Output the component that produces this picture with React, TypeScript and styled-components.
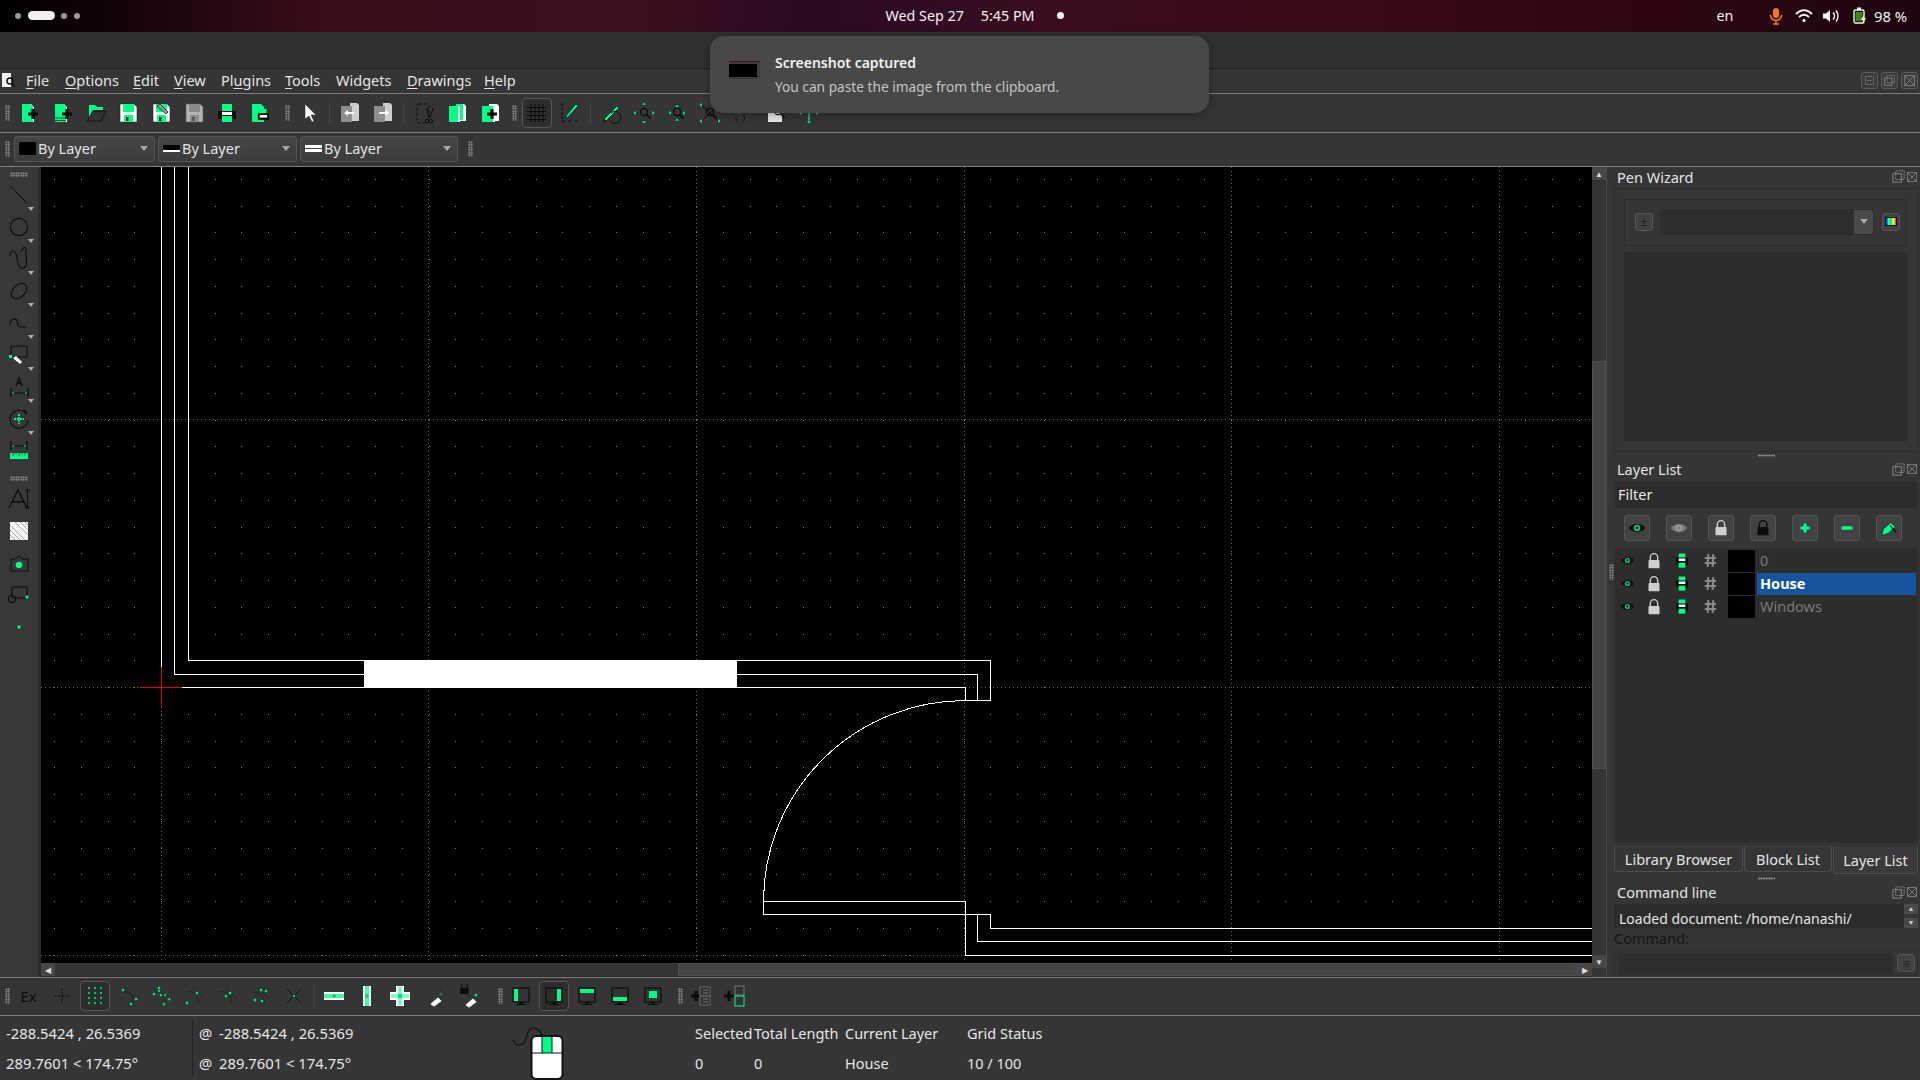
import React from "react";
import styled, { createGlobalStyle } from "styled-components";

const G = "#00ff85";
const K = "#0c0c0c";
const W = "#ffffff";

const GlobalStyle = createGlobalStyle`
  html, body { margin: 0; padding: 0; background: #353535; }
  body { font-family: "Noto Sans", "Open Sans", sans-serif; font-size: 14.5px; color: #e4e4e4; }
  * { box-sizing: border-box; }
`;

const plus = (x: number, y: number, c = K) => (
  <path d={`M${x - 1.6} ${y - 5}h3.2v3.4h3.4v3.2h-3.4v3.4h-3.2v-3.4h-3.4v-3.2h3.4z`} fill={c} />
);
const greenDoc = (
  <>
    <path d="M5 3h8l3 3v15H5z" fill={G} />
    <path d="M13 3h1l3 3v15h-1V6z" fill={W} />
  </>
);
const floppy = (top: string, body: string, line: string) => (
  <>
    <path d="M4 3h14l3 3v15H4z" fill={body} stroke={line} strokeWidth="0.6" />
    <rect x="7" y="3" width="11" height="8" fill={top} />
    <rect x="8" y="14" width="9" height="7" fill={top} />
    <rect x="10" y="16" width="2.5" height="4" fill={line} />
  </>
);
const pen = (
  <>
    <path d="M5 18l2 2 13-13-2-2z" fill={G} stroke={K} strokeWidth="0.7" />
    <path d="M5 18l-1 3 3-1z" fill={K} />
  </>
);
const lens = (cx = 12, cy = 11) => (
  <>
    <circle cx={cx} cy={cy} r="3.6" fill="none" stroke={K} strokeWidth="1.2" />
    <path d={`M${cx + 2.6} ${cy + 2.6}l4 4`} stroke={K} strokeWidth="1.6" />
  </>
);
const tri = (x: number, y: number, d: string) => {
  const p: Record<string, string> = {
    u: `M${x} ${y - 2}l2.4 3h-4.8z`,
    d: `M${x} ${y + 2}l2.4 -3h-4.8z`,
    l: `M${x - 2} ${y}l3 -2.4v4.8z`,
    r: `M${x + 2} ${y}l-3 -2.4v4.8z`,
  };
  return <path d={p[d]} fill={G} stroke={K} strokeWidth="0.4" />;
};
const dot = (x: number, y: number, r = 1.5) => <circle cx={x} cy={y} r={r} fill={G} stroke={K} strokeWidth="0.3" />;
const screen = (fill: React.ReactNode) => (
  <>
    <rect x="4" y="4" width="16" height="14" fill="none" stroke={K} strokeWidth="1.2" />
    <path d="M10 18h4v2h3v1H7v-1h3z" fill={K} />
    {fill}
  </>
);
const lockBody = (c: string) => (
  <>
    <path d="M8 11V8a4 4 0 0 1 8 0v3" fill="none" stroke={c} strokeWidth="1.5" />
    <rect x="6" y="11" width="12" height="9" rx="1" fill={c} />
  </>
);
const eye = (iris: string, lid: string) => (
  <>
    <path d="M3 12c4-6 14-6 18 0-4 6-14 6-18 0z" fill={lid} />
    <circle cx="12" cy="12" r="3.6" fill={iris} />
    <circle cx="12" cy="12" r="1.6" fill={lid} />
  </>
);
const printer = (
  <>
    <rect x="7" y="3" width="10" height="7" fill={G} />
    <rect x="3" y="10" width="18" height="8" rx="1" fill={K} />
    <rect x="7" y="11" width="10" height="3" fill={W} />
    <rect x="7" y="15" width="10" height="6" fill={G} />
  </>
);

const icons: Record<string, React.ReactNode> = {
  new: <>{greenDoc}{plus(16, 13)}</>,
  newTpl: <>{greenDoc}<path d="M5 17h11M5 19.5h11" stroke="#222" strokeWidth="0.8" />{plus(17, 13)}</>,
  open: (
    <>
      <path d="M6 4h6l2 2h6v3H10l-4 9z" fill={G} />
      <path d="M10 10h13l-5 10H4z" fill="#333" stroke={K} strokeWidth="0.8" />
    </>
  ),
  save: floppy(G, W, "#222"),
  saveAs: <>{floppy(G, W, "#222")}<path d="M8 5l9 8 2-2-8-8z" fill="#9a9a9a" stroke={K} strokeWidth="0.7" /></>,
  saveAll: floppy("#8a8a8a", "#b4b4b4", "#555"),
  print: printer,
  preview: (
    <>
      <path d="M4 3h9l3 3v15H4z" fill={G} />
      <g transform="translate(8 6) scale(.62)"><rect x="7" y="3" width="10" height="7" fill={G} /><rect x="3" y="10" width="18" height="11" fill={K} /><rect x="6" y="13" width="12" height="4" fill={W} /></g>
    </>
  ),
  pointer: <path d="M7 3v15l4-3 3 6 2-1-3-6h5z" fill={W} stroke="#222" strokeWidth="0.5" />,
  docPrev: (
    <>
      <path d="M12 2h7l2 2v16h-9z" fill="#cfcfcf" />
      <path d="M3 5h11v16H3z" fill="#8e8e8e" />
      <path d="M6 12l4-3v2h6v2h-6v2z" fill={W} />
    </>
  ),
  docNext: (
    <>
      <path d="M12 2h7l2 2v16h-9z" fill="#cfcfcf" />
      <path d="M3 5h11v16H3z" fill="#8e8e8e" />
      <path d="M18 12l-4-3v2H8v2h6v2z" fill={W} />
    </>
  ),
  cut: (
    <>
      <rect x="5" y="3" width="12" height="19" rx="2" fill="none" stroke={K} strokeWidth="1" strokeDasharray="3 2" />
      <path d="M15 7l2 10M21 7l-3 10" stroke={K} strokeWidth="1" />
      <circle cx="15" cy="20" r="1.7" fill="none" stroke={K} />
      <circle cx="19" cy="20" r="1.7" fill="none" stroke={K} />
    </>
  ),
  copy: (
    <>
      <path d="M11 3h8l2 2v15H11z" fill={W} />
      <path d="M11 3h7v16h-7z" fill={G} />
      <path d="M4 5h10l1 1v15H4z" fill={W} />
      <path d="M4 5h9v16H4z" fill={G} />
    </>
  ),
  paste: (
    <>
      <path d="M11 3h8l2 2v15H11z" fill={W} />
      <path d="M4 5h11v16H4z" fill={G} />
      <path d="M15 5h2v16h-2z" fill={W} />
      {plus(14, 13)}
    </>
  ),
  grid: <path d="M7 3v18M11 3v18M15 3v18M19 3v18M3 6.5h19M3 10.5h19M3 14.5h19M3 18.5h19" stroke={K} strokeWidth="1.1" transform="translate(-1 0)" />,
  draft: (
    <>
      <path d="M4 2v16M4 20h3M10 20h4M17 20h4M4 20v2" stroke={K} strokeWidth="1.1" strokeDasharray="3 1.6" fill="none" />
      <path d="M8 15l1 2 11-12-2-2z" fill={G} stroke={K} strokeWidth="0.6" />
    </>
  ),
  redraw: (
    <>
      {pen}
      <path d="M12 12a6 6 0 1 1-2 5" fill="none" stroke={K} strokeWidth="1" />
    </>
  ),
  zoomIn: <>{lens()}{tri(12, 3, "u")}{tri(12, 21, "d")}{tri(3, 12, "l")}{tri(21, 12, "r")}</>,
  zoomOut: <>{lens()}{tri(12, 5, "d")}{tri(12, 19, "u")}{tri(5, 12, "r")}{tri(19, 12, "l")}</>,
  zoomAuto: (
    <>
      <path d="M4 4l16 16M20 4L4 20" stroke={K} strokeWidth="1" />
      {lens()}
      {tri(3, 4, "l")}{tri(21, 20, "r")}{tri(3, 20, "l")}{tri(21, 4, "r")}
    </>
  ),
  zoomPrev: <path d="M5 17v3M12 14c2 2 2 5 0 7" stroke={K} strokeWidth="1" fill="none" />,
  zoomWin: <><path d="M4 4h14v17H4z" fill="#e8e8e8" />{lens(14, 10)}</>,
  zoomPan: <><path d="M12 6v14" stroke={G} strokeWidth="1.2" />{tri(12, 21, "d")}{tri(4, 12, "l")}{tri(20, 12, "r")}</>,
  // left tool box
  line: <path d="M3 3l17 17" stroke={K} strokeWidth="1" />,
  circle: <circle cx="12" cy="12" r="8.6" fill="none" stroke={K} strokeWidth="1.1" />,
  spline: <path d="M3 9c0-8 6-6 7 2s3 12 7 10 2-6 2-16-4-2-5 0" fill="none" stroke={K} strokeWidth="1.1" />,
  ellipse: <ellipse cx="12" cy="12" rx="9" ry="6" transform="rotate(-45 12 12)" fill="none" stroke={K} strokeWidth="1.1" />,
  polyline: <path d="M3 14c0-6 4-7 7-5 1 1 0 7 3 7h7" fill="none" stroke={K} strokeWidth="1.1" />,
  select: (
    <>
      <rect x="4" y="3" width="16" height="11" rx="1.5" fill="none" stroke={K} strokeWidth="1.1" />
      <rect x="2" y="12" width="3" height="3" fill={G} />
      <path d="M6 15l3-2 6 6-2 2-6-5z" fill={W} />
    </>
  ),
  dimText: (
    <>
      <path d="M4 13v9M21 13v9M5 18h15" stroke={K} strokeWidth="1.2" />
      <path d="M9 11l3-8 3 8M10 8h4" fill="none" stroke={K} strokeWidth="1.3" />
      {dot(6, 18, 1)}{dot(19, 18, 1)}
    </>
  ),
  center: (
    <>
      <path d="M20 8a9 9 0 1 0 1 5M17 3l3 3" fill="none" stroke={K} strokeWidth="1.1" />
      <path d="M12 7v10M7 12h10" stroke={G} strokeWidth="1.8" strokeDasharray="2 1" />
    </>
  ),
  measure: (
    <>
      <path d="M4 2v9M20 2v9M5 7h14" stroke={K} strokeWidth="1.2" />
      {dot(6, 7, 1)}{dot(18, 7, 1)}
      <path d="M3 14h18v6H3z" fill={G} />
      <path d="M6 14v3M9 14v2M12 14v3M15 14v2M18 14v3" stroke="#333" strokeWidth="0.8" />
    </>
  ),
  textTool: (
    <>
      <path d="M2 21L11 3l9 18M5 15h12" fill="none" stroke={K} strokeWidth="1.3" />
      <path d="M18 3h5M20.5 3v18M18 21h5" stroke={K} strokeWidth="1" />
    </>
  ),
  hatch: (
    <>
      <rect x="3" y="3" width="18" height="18" fill="#f4f4f4" />
      <path d="M3 6l15 15M3 11l10 10M3 16l5 5M8 3l13 13M13 3l8 8M18 3l3 3" stroke="#888" strokeWidth="0.7" />
    </>
  ),
  camera: (
    <>
      <path d="M4 8h4l4-3 4 3h5v12H4z" fill="none" stroke={K} strokeWidth="1" />
      <circle cx="12" cy="14" r="3.3" fill={G} />
    </>
  ),
  insert: (
    <>
      <rect x="5" y="4" width="15" height="11" rx="2" fill="none" stroke={K} strokeWidth="1.2" />
      <circle cx="5" cy="16" r="3.6" fill="none" stroke={K} strokeWidth="1.1" />
      {dot(20, 14, 1.8)}
    </>
  ),
  point: dot(12, 12, 1.9),
  // bottom tool bar
  snapFree: <path d="M12 4v16M4 12h16" stroke={K} strokeWidth="1" strokeDasharray="2.4 1.2" />,
  snapGrid: (
    <>
      {[6, 12, 18].map((x) => [4, 9, 14, 19].map((y) => <React.Fragment key={`${x}${y}`}>{dot(x, y, 1.2)}</React.Fragment>))}
    </>
  ),
  snapEnd: <><path d="M5 8c6-2 10 4 12 10M8 4l13 13" stroke="#222" fill="none" />{dot(6, 6)}{dot(14, 20)}{dot(19, 15)}</>,
  snapEnt: <>{dot(4, 10)}{dot(9, 7)}{dot(9, 4)}{dot(11, 11)}{dot(15, 11)}{dot(19, 15)}{dot(14, 20)}<path d="M5 8c6-1 10 4 10 12M9 5l10 10" stroke="#222" fill="none" strokeWidth="0.7" /></>,
  snapCenter: <><path d="M3 8c7-2 12 3 13 11M9 3l12 12" stroke="#222" fill="none" />{dot(14, 9)}{dot(4, 19)}</>,
  snapMid: <><path d="M3 8c7-2 12 3 13 11M9 3l12 12" stroke="#222" fill="none" />{dot(14, 9)}{dot(10, 12)}</>,
  snapDist: <><path d="M3 9c7-2 12 3 13 11M9 4l11 11" stroke="#222" fill="none" />{dot(12, 6)}{dot(17, 7)}{dot(6, 16)}{dot(13, 17)}</>,
  snapInt: <><path d="M5 5l14 14M19 5L5 19" stroke={K} strokeWidth="0.9" />{dot(12, 12, 1.2)}</>,
  restH: (
    <>
      <rect x="2" y="8" width="20" height="8" fill={W} />
      <path d="M2 11h20M2 13h20" stroke={G} strokeWidth="1.5" />
      {dot(12, 12, 1.5)}
    </>
  ),
  restV: (
    <>
      <rect x="8" y="2" width="8" height="20" fill={W} />
      <path d="M11 2v20M13 2v20" stroke={G} strokeWidth="1.5" />
      {dot(12, 12, 1.5)}
    </>
  ),
  restO: (
    <>
      <path d="M8 2h8v6h6v8h-6v6H8v-6H2V8h6z" fill={W} />
      <path d="M11 3v18M13 3v18M3 11h18M3 13h18" stroke={G} strokeWidth="1.1" />
      {dot(12, 12, 1.5)}
    </>
  ),
  relZero: <><path d="M5 20l8-7 4 4-8 6z" fill={W} stroke="#222" strokeWidth="0.6" />{dot(16, 10, 1.6)}<path d="M16 4v12M10 10h12" stroke="#222" strokeWidth="0.6" /></>,
  relLock: (
    <>
      <g transform="translate(-3 -4) scale(.7)">{lockBody(K)}</g>
      <path d="M6 21l8-7 4 4-8 6z" fill={W} stroke="#222" strokeWidth="0.6" />
      {dot(17, 11, 1.6)}
    </>
  ),
  dockL: screen(<rect x="5" y="5" width="4" height="12" fill={G} />),
  dockR: screen(<rect x="15" y="5" width="4" height="12" fill={G} />),
  dockT: screen(<rect x="5" y="5" width="14" height="4" fill={G} />),
  dockB: screen(<rect x="5" y="13" width="14" height="4" fill={G} />),
  dockF: screen(<rect x="8" y="7" width="8" height="7" fill={G} />),
  addLayer: (
    <>
      {plus(7, 12)}
      <rect x="11" y="3" width="10" height="18" fill="#333" stroke="#666" />
      <path d="M11 12h10M14 6h5M14 9h5M14 15h5M14 18h5" stroke="#777" />
    </>
  ),
  addGroup: (
    <>
      {plus(7, 12)}
      <rect x="13" y="2" width="9" height="9" fill="#333" stroke="#777" />
      <rect x="13" y="12" width="9" height="10" fill="#333" stroke={G} />
    </>
  ),
  // layer list
  eyeOn: eye("#00d070", K),
  eyeOff: eye("#9a9a9a", "#7c7c7c"),
  lockOpen: lockBody("#cfcfcf"),
  lockShut: lockBody(K),
  addG: plus(12, 12, G),
  removeG: <rect x="6" y="10" width="12" height="4" rx="1" fill={G} />,
  editG: <><path d="M4 20l2-7 8-7 5 5-8 7z" fill={G} stroke={K} strokeWidth="0.6" /><path d="M13 9l7 8" stroke={K} strokeWidth="1.2" /></>,
  printRow: (
    <>
      <rect x="8" y="3" width="8" height="5" fill={G} />
      <rect x="5" y="8" width="14" height="9" fill={K} />
      <rect x="8" y="9" width="8" height="3" fill={W} />
      <rect x="8" y="14" width="8" height="6" fill={G} />
    </>
  ),
  hash: <path d="M9 3L8 21M16 3l-1 18M4 8.5h16M4 15.5h16" stroke="#8a8a8a" strokeWidth="3" />,
  // window controls
  winMin: <path d="M3 3h10v10H3zM5 8h6" fill="none" stroke="#8e8e8e" strokeDasharray="2 1" />,
  winFloat: <><path d="M2 5h9v9H2z" fill="none" stroke="#8e8e8e" /><path d="M5 2h9v9H5z" fill="none" stroke="#8e8e8e" strokeDasharray="2 1" /></>,
  winClose: <><path d="M2 2h12v12H2z" fill="none" stroke="#8e8e8e" /><path d="M2 2l12 12M14 2L2 14" stroke="#8e8e8e" /></>,
};

const Ico = ({ n, s = 24 }: { n: string; s?: number }) => (
  <svg viewBox="0 0 24 24" width={s} height={s}>{icons[n]}</svg>
);
const SmallIco = ({ n, s = 16 }: { n: string; s?: number }) => (
  <svg viewBox="0 0 16 16" width={s} height={s}>{icons[n]}</svg>
);

const Page = styled.div`
  width: 1920px;
  height: 1080px;
  display: flex;
  flex-direction: column;
  overflow: hidden;
  position: relative;
  background: #353535;
`;

const TopBar = styled.div`
  height: 32px;
  flex: none;
  display: grid;
  grid-template-columns: 1fr auto 1fr;
  align-items: center;
  padding-bottom: 1px;
  color: #f2f2f2;
  font-size: 14.3px;
  background: linear-gradient(90deg, #000 0%, #120308 6%, #3a0d19 17%, #3d0e1d 33%, #2a0a22 42%, #3a0c20 55%, #3c0a16 68%, #30060f 84%, #1c0410 100%);
`;
const Workspaces = styled.div`
  display: flex;
  align-items: center;
  gap: 6.5px;
  padding-left: 15px;
`;
const WsDot = styled.span<{ $active?: boolean }>`
  width: ${(p) => (p.$active ? 27 : 6)}px;
  height: ${(p) => (p.$active ? 9 : 6)}px;
  border-radius: 5px;
  background: ${(p) => (p.$active ? "#f0f0f0" : "#9c9c9c")};
`;
const Clock = styled.div`
  display: flex;
  gap: 17px;
`;
const Tray = styled.div`
  display: flex;
  align-items: center;
  padding-right: 13px;
`;
const RecDot = styled.span`
  width: 7px;
  height: 7px;
  border-radius: 50%;
  background: #f4f4f4;
  margin-left: 22px;
  margin-right: auto;
`;
const TraySlot = styled.span<{ $w: number }>`
  width: ${(p) => p.$w}px;
  display: flex;
  justify-content: center;
  align-items: center;
`;
const BatteryText = styled.span`
  margin-left: 2px;
  font-size: 14.8px;
`;

const TitleGap = styled.div`
  height: 37px;
  flex: none;
  background: #303030;
  border-bottom: 1px solid #1f1f1f;
`;

const MenuBar = styled.div`
  height: 25px;
  flex: none;
  display: flex;
  align-items: center;
  padding-bottom: 2px;
  background: #353535;
  border-bottom: 1px solid #7c7c7c;
  position: relative;
`;
const AppMark = styled.svg`
  width: 14px;
  height: 16px;
  margin: 0 10px 0 2px;
  flex: none;
`;
const MenuItem = styled.span<{ $w: number }>`
  width: ${(p) => p.$w}px;
  color: #e4e4e4;
  white-space: nowrap;
  u { text-underline-offset: 2px; }
`;
const WinButtons = styled.div`
  margin-left: auto;
  display: flex;
  gap: 2px;
  padding-right: 2px;
`;
const WinButton = styled.span`
  width: 17px;
  height: 17px;
  border: 1px solid #5a5a5a;
  border-radius: 3px;
  background: #3c3c3c;
  display: flex;
  align-items: center;
  justify-content: center;
  margin-left: 1px;
`;

const Toolbar = styled.div<{ $h: number; $top?: boolean }>`
  height: ${(p) => p.$h}px;
  flex: none;
  display: flex;
  align-items: center;
  padding-bottom: 1px;
  background: #353535;
  border-bottom: 1px solid #7c7c7c;
  border-top: ${(p) => (p.$top ? "1px solid #7c7c7c" : "none")};
`;
const Grip = styled.span<{ $ml?: number; $mr?: number }>`
  width: 5px;
  height: 16px;
  flex: none;
  margin-left: ${(p) => p.$ml ?? 0}px;
  margin-right: ${(p) => p.$mr ?? 0}px;
  background: radial-gradient(#808080 50%, transparent 55%) 0 0 / 2.5px 2.5px;
`;
const Sep = styled.span<{ $ml?: number; $mr?: number }>`
  width: 1px;
  height: 22px;
  flex: none;
  margin-left: ${(p) => p.$ml ?? 0}px;
  margin-right: ${(p) => p.$mr ?? 0}px;
  background: #444;
`;
const Tool = styled.span<{ $w?: number; $ml?: number; $on?: boolean }>`
  width: ${(p) => p.$w ?? 33}px;
  height: 30px;
  flex: none;
  margin-left: ${(p) => p.$ml ?? 0}px;
  display: flex;
  align-items: center;
  justify-content: center;
  border: 1px solid ${(p) => (p.$on ? "#565656" : "transparent")};
  border-radius: 4px;
  background: ${(p) => (p.$on ? "#2d2d2d" : "transparent")};
  color: #0c0c0c;
  font-size: 15px;
`;

const Combo = styled.div<{ $w: number }>`
  width: ${(p) => p.$w}px;
  height: 26px;
  flex: none;
  margin-right: 3px;
  display: flex;
  align-items: center;
  padding: 0 6px 2px 4px;
  gap: 2px;
  border: 1px solid #555;
  border-radius: 3px;
  background: linear-gradient(#454545, #3c3c3c);
  color: #e4e4e4;
`;
const Swatch = styled.span<{ $kind: "color" | "width" | "style" }>`
  width: 17px;
  height: ${(p) => (p.$kind === "color" ? 13 : 7)}px;
  flex: none;
  background: ${(p) =>
    p.$kind === "color" ? "#000" : p.$kind === "width" ? "linear-gradient(#000 0 70%, #fff 70%)" : "linear-gradient(#fff 0 38%, #444 38% 62%, #fff 62%)"};
`;
const ComboArrow = styled.span<{ $plain?: boolean }>`
  margin-left: ${(p) => (p.$plain ? "0" : "auto")};
  width: 0;
  height: 0;
  border-left: 4px solid transparent;
  border-right: 4px solid transparent;
  border-top: 5px solid #aaa;
`;

const Main = styled.div`
  height: 810px;
  flex: none;
  display: flex;
`;

const ToolBox = styled.div`
  width: 41px;
  flex: none;
  display: flex;
  flex-direction: column;
  align-items: center;
  border-right: 3px solid #2c2c2c;
  background: #383838;
`;
const HGrip = styled.span<{ $mt: number; $mb: number }>`
  width: 18px;
  height: 5px;
  flex: none;
  margin-top: ${(p) => p.$mt}px;
  margin-bottom: ${(p) => p.$mb}px;
  background: radial-gradient(#808080 50%, transparent 55%) 0 0 / 2.5px 2.5px;
`;
const BoxItem = styled.span`
  position: relative;
  width: 38px;
  height: 32px;
  flex: none;
  display: flex;
  align-items: center;
  justify-content: center;
`;
const MoreMark = styled.i`
  position: absolute;
  left: 28px;
  bottom: 0;
  width: 0;
  height: 0;
  border-left: 3px solid transparent;
  border-right: 3px solid transparent;
  border-top: 4px solid #b0b0b0;
`;

const CanvasArea = styled.div`
  width: 1566px;
  flex: none;
  display: grid;
  grid-template-columns: 1551px 15px;
  grid-template-rows: 796px 14px;
`;
const Canvas = styled.svg`
  display: block;
  grid-column: 1;
  grid-row: 1;
  background: #000;
`;
const VScroll = styled.div`
  display: flex;
  flex-direction: column;
  background: #343434;
  grid-column: 2;
  grid-row: 1 / 3;
  border-right: 1px solid #4a4a4a;
`;
const HScroll = styled.div`
  display: flex;
  grid-column: 1;
  grid-row: 2;
  background: #343434;
  border-bottom: 1px solid #2c2c2c;
`;
const ScrollBtn = styled.span`
  width: 14px;
  height: 13px;
  flex: none;
  display: flex;
  align-items: center;
  justify-content: center;
  background: #474747;
  color: #ddd;
  font-size: 8px;
  line-height: 1;
`;
const ScrollGap = styled.span<{ $size?: number }>`
  flex: ${(p) => (p.$size ? `0 0 ${p.$size}px` : "1")};
`;
const ScrollThumb = styled.span<{ $size?: number }>`
  flex: ${(p) => (p.$size ? `0 0 ${p.$size}px` : "1")};
  background: #444;
  border: 1px solid #505050;
`;

const RightDock = styled.div`
  flex: 1;
  min-width: 0;
  display: flex;
  align-items: stretch;
`;
const VGrip = styled.span`
  width: 5px;
  height: 16px;
  flex: none;
  align-self: center;
  margin-left: 2px;
  background: radial-gradient(#808080 50%, transparent 55%) 0 0 / 2.5px 2.5px;
`;
const DockColumn = styled.div`
  flex: 1;
  min-width: 0;
  display: flex;
  flex-direction: column;
  padding-right: 2px;
`;
const DockTitle = styled.div<{ $h: number }>`
  height: ${(p) => p.$h}px;
  flex: none;
  display: flex;
  align-items: center;
  padding: 0 0 2px 3px;
  color: #e4e4e4;
`;
const DockActions = styled.span`
  margin-left: auto;
  display: flex;
  align-items: center;
`;
const PenFrame = styled.div`
  height: 264px;
  flex: none;
  margin-left: -1px;
  padding: 10px;
  border: 1px solid #2c2c2c;
  display: flex;
  flex-direction: column;
  gap: 6px;
`;
const PenRow = styled.div`
  height: 47px;
  flex: none;
  display: flex;
  align-items: center;
  padding: 0 0 2px 10px;
  border: 1px solid #2c2c2c;
`;
const SquareButton = styled.span<{ $size: number; $ml?: number }>`
  width: ${(p) => p.$size}px;
  height: ${(p) => p.$size}px;
  flex: none;
  margin-left: ${(p) => p.$ml ?? 0}px;
  display: flex;
  align-items: center;
  justify-content: center;
  border: 1px solid #555;
  border-radius: 3px;
  background: #424242;
  color: #222;
  font-size: 12px;
`;
const PenCombo = styled.div`
  width: 214px;
  height: 26px;
  flex: none;
  margin-left: 7px;
  display: flex;
  justify-content: flex-end;
  border: 1px solid #2c2c2c;
  border-radius: 3px;
  background: #2e2e2e;
`;
const PenComboDrop = styled.span`
  width: 19px;
  display: flex;
  align-items: center;
  justify-content: center;
  background: #4a4a4a;
  border-radius: 0 3px 3px 0;
`;
const HueBox = styled.span`
  width: 12px;
  height: 9px;
  background: linear-gradient(90deg, #00f 0%, #0ff 25%, #0f0 50%, #ff0 75%, #f0f 100%);
  border: 1px solid #111;
`;
const PenList = styled.div`
  flex: 1;
  background: #2d2d2d;
  border: 1px solid #2a2a2a;
`;
const Splitter = styled.span<{ $h: number }>`
  height: ${(p) => p.$h}px;
  flex: none;
  display: flex;
  justify-content: center;
  align-items: center;
  &::after {
    content: "";
    width: 17px;
    height: 3px;
    background: radial-gradient(#808080 50%, transparent 55%) 0 0 / 2.5px 2.5px;
  }
`;
const Filter = styled.div`
  height: 27px;
  flex: none;
  display: flex;
  align-items: center;
  padding: 0 0 2px 3px;
  border-radius: 3px;
  border: 1px solid #303030;
  background: #2c2c2c;
  color: #e8e8e8;
`;
const LayerTools = styled.div`
  height: 26px;
  flex: none;
  display: flex;
  gap: 16px;
  margin: 7px 0 7px 10px;
`;
const LayerTool = styled.span`
  width: 26px;
  height: 26px;
  display: flex;
  align-items: center;
  justify-content: center;
  border: 1px solid #555;
  border-radius: 3px;
  background: #424242;
`;
const LayerTable = styled.div`
  height: 295px;
  flex: none;
  background: #2d2d2d;
  border: 1px solid #303030;
  border-right: none;
`;
const LayerRow = styled.div`
  height: 23px;
  display: grid;
  grid-template-columns: 25px 28px 28px 28px 32px 1fr;
  align-items: center;
  justify-items: center;
`;
const LayerSwatch = styled.span`
  width: 27px;
  height: 22px;
  margin-left: 3px;
  background: #000;
`;
const LayerName = styled.span<{ $active?: boolean }>`
  justify-self: stretch;
  height: 22px;
  margin: 0 2px 0 1px;
  padding-left: 3px;
  line-height: 20px;
  color: ${(p) => (p.$active ? "#fff" : "#7a7a7a")};
  font-weight: ${(p) => (p.$active ? 700 : 400)};
  background: ${(p) => (p.$active ? "#17549e" : "transparent")};
`;
const Tabs = styled.div`
  height: 28px;
  flex: none;
  display: flex;
  margin-top: 3px;
  gap: 1px;
`;
const Tab = styled.span<{ $w: number; $active?: boolean }>`
  width: ${(p) => p.$w}px;
  height: ${(p) => (p.$active ? 28 : 26)}px;
  display: flex;
  align-items: center;
  justify-content: center;
  border: 1px solid #4c4c4c;
  border-top-color: ${(p) => (p.$active ? "#353535" : "#3f3f3f")};
  border-radius: 0 0 4px 4px;
  color: #e4e4e4;
  background: ${(p) => (p.$active ? "#3a3a3a" : "#353535")};
`;
const LogBox = styled.div`
  height: 24px;
  flex: none;
  display: flex;
  align-items: center;
  background: #2c2c2c;
  padding: 5px 0 0 5px;
  font-size: 14px;
  position: relative;
  margin-top: 1px;
`;
const LogArrows = styled.span`
  position: absolute;
  right: 0;
  top: 0;
  bottom: 0;
  width: 14px;
  display: flex;
  flex-direction: column;
  justify-content: space-between;
  background: #353535;
`;
const LogArrow = styled.span`
  height: 10px;
  background: #4a4a4a;
  color: #ccc;
  font-size: 7px;
  line-height: 10px;
  text-align: center;
`;
const CommandLabel = styled.div`
  height: 22px;
  flex: none;
  display: flex;
  align-items: center;
  padding-bottom: 2px;
  color: #141414;
`;
const CommandFrame = styled.div`
  height: 26px;
  flex: none;
  display: flex;
  align-items: center;
  padding: 0 2px 0 3px;
  border: 1px solid #2e2e2e;
`;
const CommandInput = styled.span`
  width: 276px;
  height: 21px;
  background: #2e2e2e;
`;

const StatusBar = styled.div`
  height: 64px;
  flex: none;
  display: flex;
  font-size: 14.5px;
  color: #e6e6e6;
`;
const CoordBlock = styled.div<{ $w: number; $pl: number }>`
  width: ${(p) => p.$w}px;
  flex: none;
  padding-left: ${(p) => p.$pl}px;
  display: grid;
  grid-auto-rows: 30px;
  align-content: center;
  align-items: center;
  font-size: 14.8px;
`;
const CoordRow = styled.div`
  display: flex;
  white-space: nowrap;
`;
const AtSign = styled.span`
  width: 20px;
`;
const StatusDivider = styled.span`
  width: 1px;
  flex: none;
  margin: 3px 0;
  background: #222;
`;
const MouseIcon = styled.svg`
  width: 51px;
  height: 54px;
  flex: none;
  align-self: flex-end;
  margin-right: 131px;
`;
const InfoCol = styled.div<{ $w: number }>`
  width: ${(p) => p.$w}px;
  flex: none;
  display: grid;
  grid-auto-rows: 30px;
  align-content: center;
  align-items: center;
  white-space: nowrap;
`;

const Notification = styled.div`
  position: absolute;
  left: 710px;
  top: 36px;
  width: 499px;
  height: 77px;
  border-radius: 14px;
  background: #484848;
  box-shadow: 0 2px 8px rgba(0, 0, 0, 0.35);
  display: flex;
  padding: 25px 0 0 19px;
`;
const Thumb = styled.span`
  width: 31px;
  height: 18px;
  flex: none;
  background: #3d3d3d;
  border-top: 1px solid #4a1020;
  padding: 2px 3px 2px 0;
  display: flex;
`;
const ThumbInner = styled.span`
  flex: 1;
  background: #000;
`;
const NoteText = styled.div`
  margin: -8px 0 0 15px;
  display: flex;
  flex-direction: column;
  gap: 5px;
`;
const NoteTitle = styled.div`
  font-weight: 600;
  font-size: 14px;
  color: #f0f0f0;
`;
const NoteBody = styled.div`
  font-size: 13.7px;
  color: #c4c4c4;
`;

const majorX = [161, 428, 696, 964, 1231, 1499];
const majorY = [419, 687, 955];

const gridDots = () => {
  let d = "";
  for (let i = -4; i < 54; i++) {
    for (let j = -19; j < 11; j++) {
      d += `M${Math.round(161 + i * 26.75)} ${Math.round(687 + j * 26.75)}h1v1h-1z`;
    }
  }
  return d;
};

const wallPaths = [
  "M161.5 167V667",
  "M174.5 167V674.5H364",
  "M188.5 167V660.5H364",
  "M182 687.5H364",
  "M737 660.5H990.5V700.5H957",
  "M737 674.5H977.5V700.5",
  "M737 687.5H965.5V700.5",
  "M763.5 901.5H965.5V955.5H1592",
  "M763.5 901.5V914.5H990.5V928.5H1592",
  "M977.5 914.5V941.5H1592",
];

const Drawing = () => (
  <Canvas viewBox="41 167 1551 796" width={1551} height={796} shapeRendering="crispEdges">
    <path d={gridDots()} fill="#808080" />
    {majorX.map((x) => (
      <line key={x} x1={x + 0.5} x2={x + 0.5} y1={167} y2={963} stroke="#666" strokeDasharray="1 3" />
    ))}
    {majorY.map((y) => (
      <line key={y} x1={41} x2={1592} y1={y + 0.5} y2={y + 0.5} stroke="#666" strokeDasharray="1 3" />
    ))}
    {wallPaths.map((d) => (
      <path key={d} d={d} fill="none" stroke="#fff" />
    ))}
    <path d="M763.5 901.5A202 201 0 0 1 965.5 700.5" fill="none" stroke="#fff" />
    <rect x={364} y={660} width={373} height={28} fill="#fff" />
    <path d="M140 687.5H182M161.5 667V708" fill="none" stroke="#e00000" />
  </Canvas>
);

const mainTools = ["new", "newTpl", "open", "save", "saveAs", "saveAll", "print", "preview"];
const zoomTools = ["zoomAuto", "zoomPrev", "zoomWin", "zoomPan"];
const boxTop = ["line", "circle", "spline", "ellipse", "polyline", "select", "dimText", "center", "measure"];
const boxBottom = ["textTool", "hatch", "camera", "insert", "point"];

const layers = [
  { name: "0" },
  { name: "House", active: true },
  { name: "Windows" },
];

const menus: [React.ReactNode, number][] = [
  [<><u>F</u>ile</>, 39],
  [<><u>O</u>ptions</>, 68],
  [<><u>E</u>dit</>, 41],
  [<><u>V</u>iew</>, 47],
  [<>Pl<u>u</u>gins</>, 64],
  [<><u>T</u>ools</>, 51],
  [<>Widgets</>, 71],
  [<><u>D</u>rawings</>, 77],
  [<><u>H</u>elp</>, 40],
];

const DockButtons = () => (
  <DockActions>
    <SmallIco n="winFloat" s={15} />
    <SmallIco n="winClose" s={12} />
  </DockActions>
);

export default function App() {
  return (
    <Page>
      <GlobalStyle />
      <TopBar>
        <Workspaces>
          <WsDot />
          <WsDot $active />
          <WsDot />
          <WsDot />
        </Workspaces>
        <Clock>
          <span>Wed Sep 27</span>
          <span>5:45 PM</span>
        </Clock>
        <Tray>
          <RecDot />
          <TraySlot $w={70}>en</TraySlot>
          <TraySlot $w={32}>
            <svg width="16" height="18" viewBox="0 0 16 18">
              <rect x="5" y="1" width="6" height="10" rx="3" fill="#f07818" />
              <path d="M2.5 8a5.5 5.5 0 0 0 11 0M8 14v3M5 17h6" stroke="#f07818" strokeWidth="1.6" fill="none" />
            </svg>
          </TraySlot>
          <TraySlot $w={24}>
            <svg width="18" height="14" viewBox="0 0 18 14" fill="none" stroke="#f4f4f4" strokeWidth="1.8">
              <path d="M1 5c5-5 11-5 16 0M4 8c3-3 7-3 10 0" />
              <circle cx="9" cy="11.5" r="1.6" fill="#f4f4f4" stroke="none" />
            </svg>
          </TraySlot>
          <TraySlot $w={32}>
            <svg width="17" height="14" viewBox="0 0 17 14">
              <path d="M0 4.500h3L7 1v12L3 9.500H0z" fill="#f4f4f4" />
              <path d="M10 3.500a5 5 0 0 1 0 7M13 1.500a9 9 0 0 1 0 11" fill="none" stroke="#f4f4f4" strokeWidth="1.6" />
            </svg>
          </TraySlot>
          <TraySlot $w={24}>
            <svg width="14" height="17" viewBox="0 0 14 17">
              <rect x="1" y="3" width="10" height="13" rx="1.500" fill="none" stroke="#f4f4f4" strokeWidth="1.400" />
              <rect x="4" y="0.500" width="4" height="2.500" fill="#f4f4f4" />
              <rect x="2.500" y="5" width="7" height="9" fill="#3d8a10" />
              <path d="M11 8l-3 5h2l-1 4 4-6h-2z" fill="#f4f4f4" />
            </svg>
          </TraySlot>
          <BatteryText>98 %</BatteryText>
        </Tray>
      </TopBar>
      <TitleGap />
      <MenuBar>
        <AppMark viewBox="0 0 14 16">
          <path d="M0 1h9v14H0z" fill="#f2f2f2" />
          <circle cx="8" cy="9" r="3" fill="none" stroke="#111" strokeWidth="1.500" />
          <path d="M10 11l3 4" stroke="#111" strokeWidth="1.500" />
        </AppMark>
        {menus.map(([label, w], i) => (
          <MenuItem key={i} $w={w}>{label}</MenuItem>
        ))}
        <WinButtons>
          <WinButton><SmallIco n="winMin" s={13} /></WinButton>
          <WinButton><SmallIco n="winFloat" s={13} /></WinButton>
          <WinButton><SmallIco n="winClose" s={13} /></WinButton>
        </WinButtons>
      </MenuBar>
      <Toolbar $h={39}>
        <Grip $ml={5} $mr={2} />
        {mainTools.map((n) => (
          <Tool key={n}><Ico n={n} /></Tool>
        ))}
        <Grip $ml={9} $mr={3} />
        <Tool><Ico n="pointer" /></Tool>
        <Sep $ml={3} $mr={3} />
        <Tool><Ico n="docPrev" /></Tool>
        <Tool><Ico n="docNext" /></Tool>
        <Sep $ml={4} $mr={3} />
        <Tool><Ico n="cut" /></Tool>
        <Tool><Ico n="copy" /></Tool>
        <Tool><Ico n="paste" /></Tool>
        <Grip $ml={6} $mr={5} />
        <Tool $w={30} $on><Ico n="grid" /></Tool>
        <Tool $ml={1}><Ico n="draft" /></Tool>
        <Sep $ml={4} $mr={3} />
        <Tool><Ico n="redraw" /></Tool>
        <Tool><Ico n="zoomIn" /></Tool>
        <Tool><Ico n="zoomOut" /></Tool>
        {zoomTools.map((n) => (
          <Tool key={n}><Ico n={n} /></Tool>
        ))}
      </Toolbar>
      <Toolbar $h={34}>
        <Grip $ml={5} $mr={4} />
        <Combo $w={141}>
          <Swatch $kind="color" />By Layer<ComboArrow />
        </Combo>
        <Combo $w={139}>
          <Swatch $kind="width" />By Layer<ComboArrow />
        </Combo>
        <Combo $w={158}>
          <Swatch $kind="style" />By Layer<ComboArrow />
        </Combo>
        <Grip $ml={7} />
      </Toolbar>
      <Main>
        <ToolBox>
          <HGrip $mt={5} $mb={2} />
          {boxTop.map((n, i) => (
            <BoxItem key={n}>
              <Ico n={n} />
              {i < 8 && <MoreMark />}
            </BoxItem>
          ))}
          <HGrip $mt={9} $mb={2} />
          {boxBottom.map((n) => (
            <BoxItem key={n}><Ico n={n} /></BoxItem>
          ))}
        </ToolBox>
        <CanvasArea>
          <Drawing />
          <VScroll>
            <ScrollBtn>▲</ScrollBtn>
            <ScrollGap $size={181} />
            <ScrollThumb $size={408} />
            <ScrollGap />
            <ScrollBtn>▼</ScrollBtn>
            <ScrollGap $size={9} />
          </VScroll>
          <HScroll>
            <ScrollBtn>◀</ScrollBtn>
            <ScrollGap $size={623} />
            <ScrollThumb />
            <ScrollBtn>▶</ScrollBtn>
          </HScroll>
        </CanvasArea>
        <RightDock>
          <VGrip />
          <DockColumn>
            <DockTitle $h={21}>Pen Wizard<DockButtons /></DockTitle>
            <PenFrame>
              <PenRow>
                <SquareButton $size={18}>±</SquareButton>
                <PenCombo>
                  <PenComboDrop><ComboArrow $plain /></PenComboDrop>
                </PenCombo>
                <SquareButton $size={18} $ml={8}><HueBox /></SquareButton>
              </PenRow>
              <PenList />
            </PenFrame>
            <Splitter $h={7} />
            <DockTitle $h={22}>Layer List<DockButtons /></DockTitle>
            <Filter>Filter</Filter>
            <LayerTools>
              {["eyeOn", "eyeOff", "lockOpen", "lockShut", "addG", "removeG", "editG"].map((n) => (
                <LayerTool key={n}><Ico n={n} s={22} /></LayerTool>
              ))}
            </LayerTools>
            <LayerTable>
              {layers.map((l) => (
                <LayerRow key={l.name}>
                  <Ico n="eyeOn" s={17} />
                  <Ico n="lockOpen" s={22} />
                  <Ico n="printRow" s={20} />
                  <Ico n="hash" s={17} />
                  <LayerSwatch />
                  <LayerName $active={l.active}>{l.name}</LayerName>
                </LayerRow>
              ))}
            </LayerTable>
            <Tabs>
              <Tab $w={129}>Library Browser</Tab>
              <Tab $w={88}>Block List</Tab>
              <Tab $w={85} $active>Layer List</Tab>
            </Tabs>
            <Splitter $h={9} />
            <DockTitle $h={20}>Command line<DockButtons /></DockTitle>
            <LogBox>
              Loaded document: /home/nanashi/
              <LogArrows>
                <LogArrow>▲</LogArrow>
                <LogArrow>▼</LogArrow>
              </LogArrows>
            </LogBox>
            <CommandLabel>Command:</CommandLabel>
            <CommandFrame>
              <CommandInput />
              <SquareButton $size={18} $ml={4}>≡</SquareButton>
            </CommandFrame>
          </DockColumn>
        </RightDock>
      </Main>
      <Toolbar $h={39} $top>
        <Grip $ml={5} $mr={2} />
        <Tool>Ex</Tool>
        <Tool><Ico n="snapFree" /></Tool>
        <Tool $w={30} $ml={2} $on><Ico n="snapGrid" /></Tool>
        <Tool $ml={2}><Ico n="snapEnd" /></Tool>
        <Tool><Ico n="snapEnt" /></Tool>
        <Tool><Ico n="snapCenter" /></Tool>
        <Tool><Ico n="snapMid" /></Tool>
        <Tool><Ico n="snapDist" /></Tool>
        <Tool><Ico n="snapInt" /></Tool>
        <Sep $ml={4} $mr={2} />
        <Tool><Ico n="restH" /></Tool>
        <Tool><Ico n="restV" /></Tool>
        <Tool><Ico n="restO" /></Tool>
        <Tool $ml={4}><Ico n="relZero" /></Tool>
        <Tool $ml={1}><Ico n="relLock" /></Tool>
        <Grip $ml={11} $mr={1} />
        <Tool><Ico n="dockL" /></Tool>
        <Tool $w={30} $ml={2} $on><Ico n="dockR" /></Tool>
        <Tool $ml={1}><Ico n="dockT" /></Tool>
        <Tool><Ico n="dockB" /></Tool>
        <Tool><Ico n="dockF" /></Tool>
        <Grip $ml={9} $mr={1} />
        <Tool><Ico n="addLayer" /></Tool>
        <Tool><Ico n="addGroup" /></Tool>
      </Toolbar>
      <StatusBar>
        <CoordBlock $w={192} $pl={6}>
          <CoordRow>-288.5424 , 26.5369</CoordRow>
          <CoordRow>289.7601 &lt; 174.75°</CoordRow>
        </CoordBlock>
        <StatusDivider />
        <CoordBlock $w={320} $pl={6}>
          <CoordRow><AtSign>@</AtSign>-288.5424 , 26.5369</CoordRow>
          <CoordRow><AtSign>@</AtSign>289.7601 &lt; 174.75°</CoordRow>
        </CoordBlock>
        <MouseIcon viewBox="0 0 51 54">
          <path d="M30 11C27 3 20 0 17 3c-5 5-2 16-11 16-3 0-5-2-6-5" fill="none" stroke="#111" strokeWidth="1.200" />
          <rect x="18.500" y="10" width="31" height="43" rx="5" fill="#fff" stroke="#111" strokeWidth="2" />
          <rect x="29" y="11" width="10" height="16" fill={G} />
          <path d="M19 27h30M29 11v16M39 11v16" stroke="#111" strokeWidth="1" />
        </MouseIcon>
        <InfoCol $w={59}><span>Selected</span><span>0</span></InfoCol>
        <InfoCol $w={91}><span>Total Length</span><span>0</span></InfoCol>
        <InfoCol $w={122}><span>Current Layer</span><span>House</span></InfoCol>
        <InfoCol $w={100}><span>Grid Status</span><span>10 / 100</span></InfoCol>
      </StatusBar>
      <Notification>
        <Thumb><ThumbInner /></Thumb>
        <NoteText>
          <NoteTitle>Screenshot captured</NoteTitle>
          <NoteBody>You can paste the image from the clipboard.</NoteBody>
        </NoteText>
      </Notification>
    </Page>
  );
}
